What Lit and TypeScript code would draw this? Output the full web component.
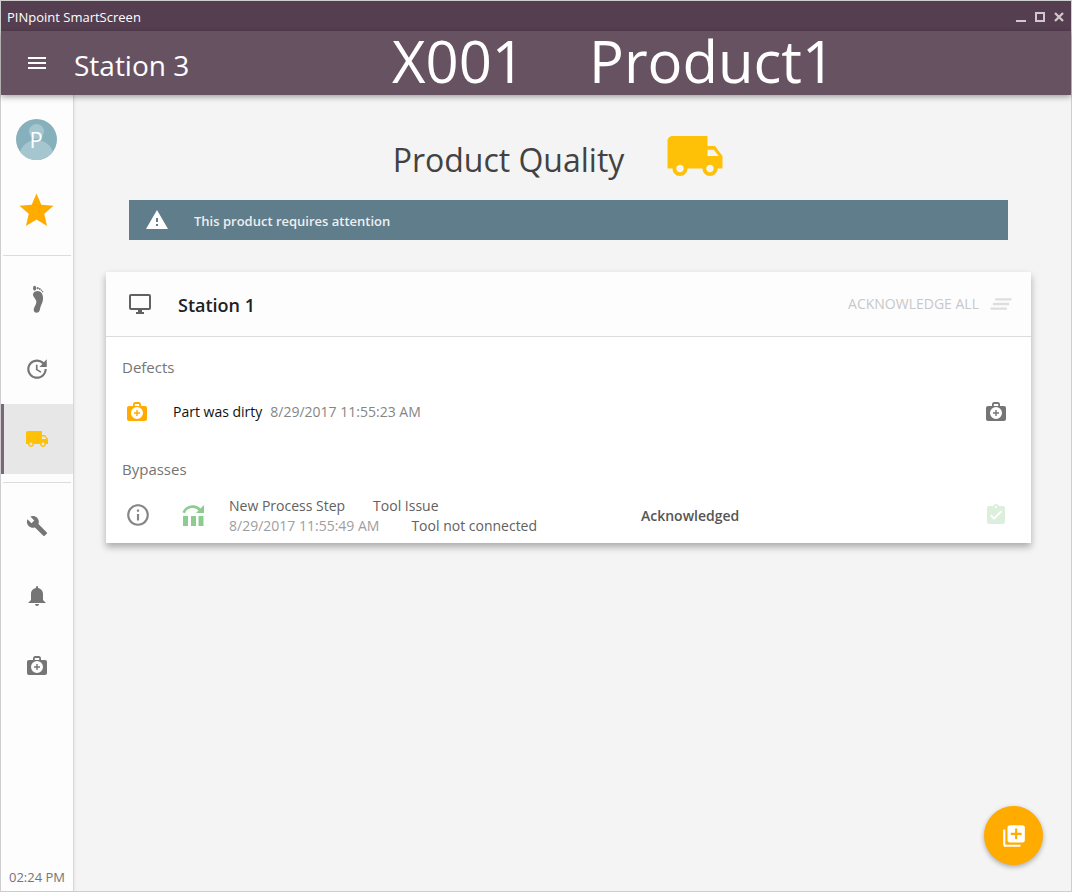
import { LitElement, html, css, svg } from "lit";
import { customElement, property } from "lit/decorators.js";

const icons: Record<string, unknown> = {
  menu: svg`<path d="M3 18h18v-2H3v2zm0-5h18v-2H3v2zm0-7v2h18V6H3z"/>`,
  minimize: svg`<path d="M2 18h20v4H2z"/>`,
  maximize: svg`<path fill-rule="evenodd" d="M2 2h20v20H2zM6 6v12h12V6z"/>`,
  close: svg`<path d="M4 4l16 16M20 4L4 20" fill="none" stroke="currentColor" stroke-width="4.600"/>`,
  star: svg`<path d="M12 17.270L18.180 21l-1.640-7.030L22 9.240l-7.190-.61L12 2 9.190 8.630 2 9.240l5.460 4.730L5.820 21z"/>`,
  foot: svg`<path d="M8.600 6.600C9.600 5 12.200 4.400 14 5.400c1.900 1.100 2.700 3.400 2.600 6-.1 2.700-1.300 4.400-2 6.400-.5 1.500-.5 3-1.300 4.200-.8 1.200-2.900 1.300-3.800.300-1-1.100-.7-2.600 0-4 .9-1.700 1.700-3.100 1.500-4.800C10.700 11 7.200 9.400 8.600 6.600z"/><ellipse cx="9.600" cy="2.700" rx="1.300" ry="2"/><circle cx="12.200" cy="2.600" r=".85"/><circle cx="13.900" cy="3.300" r=".75"/><circle cx="15.300" cy="4.300" r=".65"/><circle cx="16.300" cy="5.600" r=".55"/>`,
  update: svg`<path d="M21 10.120h-6.780l2.740-2.820c-2.730-2.700-7.150-2.800-9.880-.1-2.730 2.710-2.730 7.080 0 9.790 2.730 2.710 7.150 2.710 9.880 0C18.320 15.650 19 14.080 19 12.100h2c0 1.980-.88 4.550-2.640 6.290-3.510 3.480-9.210 3.480-12.720 0-3.500-3.470-3.530-9.110-.02-12.580 3.510-3.470 9.140-3.470 12.650 0L21 3v7.120zM12.500 8v4.250l3.500 2.080-.72 1.210L11 13V8h1.500z"/>`,
  truck: svg`<path d="M20 8h-3V4H3c-1.100 0-2 .9-2 2v11h2c0 1.660 1.340 3 3 3s3-1.340 3-3h6c0 1.660 1.340 3 3 3s3-1.340 3-3h2v-5l-3-4zM6 18.500c-.83 0-1.500-.67-1.500-1.500s.67-1.500 1.500-1.500 1.500.67 1.500 1.500-.67 1.500-1.500 1.500zm13.500-9l1.960 2.500H17V9.500h2.500zm-1.500 9c-.83 0-1.500-.67-1.500-1.500s.67-1.500 1.500-1.500 1.500.67 1.500 1.500-.67 1.500-1.500 1.500z"/>`,
  wrench: svg`<path d="M22.700 19l-9.100-9.100c.9-2.300.4-5-1.500-6.900-2-2-5-2.400-7.400-1.300L9 6 6 9 1.600 4.700C.4 7.100.9 10.100 2.900 12.100c1.900 1.900 4.600 2.400 6.900 1.500l9.100 9.100c.4.4 1 .4 1.400 0l2.300-2.300c.5-.4.5-1.100.1-1.400z"/>`,
  bell: svg`<path d="M14 20a2 2 0 0 1-2 2 2 2 0 0 1-2-2h4zM12 2a1 1 0 0 1 1 1v1.080c2.840.48 5 2.940 5 5.920v6l3 3H3l3-3v-6c0-2.980 2.160-5.440 5-5.920V3a1 1 0 0 1 1-1z"/>`,
  medkit: svg`<path fill-rule="evenodd" d="M8 6V4.500C8 3.100 8.900 2 10.200 2h3.600C15.100 2 16 3.100 16 4.500V6h4c1.200 0 2 .9 2 2v11c0 1.200-.9 2-2 2H4c-1.200 0-2-.9-2-2V8c0-1.200.9-2 2-2zm1.800 0h4.400V4H9.800zM12 7a6 6 0 1 0 0 12 6 6 0 0 0 0-12z"/><path d="M11.300 10h1.400v2.300H15v1.400h-2.300V16h-1.400v-2.300H9v-1.400h2.300z"/>`,
  warning: svg`<path d="M1 21h22L12 2 1 21zm12-3h-2v-2h2v2zm0-4h-2v-4h2v4z"/>`,
  monitor: svg`<path d="M21 16H3V4h18m0-2H3c-1.110 0-2 .89-2 2v12a2 2 0 0 0 2 2h7v2H8v2h8v-2h-2v-2h7a2 2 0 0 0 2-2V4a2 2 0 0 0-2-2z"/>`,
  clearAll: svg`<path d="M5 13h14v-2H5v2zm-2 4h14v-2H3v2zM7 7v2h14V7H7z"/>`,
  info: svg`<path d="M11 17h2v-6h-2v6zm1-15C6.480 2 2 6.480 2 12s4.480 10 10 10 10-4.480 10-10S17.520 2 12 2zm0 18c-4.410 0-8-3.590-8-8s3.590-8 8-8 8 3.590 8 8-3.590 8-8 8zM11 9h2V7h-2v2z"/>`,
  stepOver: svg`<path d="M2 13h5v10H2zM10 13h5v10h-5zM17.500 13h5v10h-5z"/><path d="M2.600 9.800C5.500 2.600 14.500 1.800 19.200 7.200" fill="none" stroke="currentColor" stroke-width="2.600"/><path d="M23 2v8h-8z"/>`,
  check: svg`<path d="M19 3h-4.180C14.400 1.840 13.300 1 12 1c-1.300 0-2.400.84-2.820 2H5c-1.100 0-2 .9-2 2v14c0 1.100.9 2 2 2h14c1.100 0 2-.9 2-2V5c0-1.100-.9-2-2-2zm-7 0c.55 0 1 .45 1 1s-.45 1-1 1-1-.45-1-1 .45-1 1-1zm-2 14l-4-4 1.410-1.410L10 14.170l6.590-6.590L18 9l-8 8z"/>`,
  libraryAdd: svg`<path d="M4 6H2v14c0 1.100.9 2 2 2h14v-2H4V6zm16-4H8c-1.100 0-2 .9-2 2v12c0 1.100.9 2 2 2h12c1.100 0 2-.9 2-2V4c0-1.100-.9-2-2-2zm-1 9h-4v4h-2v-4H9V9h4V5h2v4h4v2z"/>`,
};

@customElement("ui-icon")
export class UiIcon extends LitElement {
  @property() name = "";

  static styles = css`
    :host { display: block; flex: none; width: 24px; height: 24px; }
    svg { display: block; width: 100%; height: 100%; fill: currentColor; }
  `;

  render() {
    return html`<svg viewBox="0 0 24 24" aria-hidden="true">${icons[this.name]}</svg>`;
  }
}

@customElement("side-nav")
export class SideNav extends LitElement {
  static styles = css`
    :host {
      display: flex;
      flex-direction: column;
      flex: none;
      width: 72px;
      background: #fdfdfd;
      border-right: 1px solid #d8d8d8;
      box-shadow: 1px 0 2px rgba(0, 0, 0, 0.06);
      color: #757575;
    }
    button {
      display: flex;
      align-items: center;
      justify-content: center;
      width: 100%;
      height: 70px;
      padding: 0;
      border: 0;
      background: none;
      color: inherit;
      font: inherit;
      cursor: pointer;
    }
    .profile { display: grid; gap: 1px; padding: 9px 2px 2px 0; }
    .avatar {
      display: grid;
      width: 41px;
      height: 41px;
      border-radius: 50%;
      overflow: hidden;
      background: #86b1bc;
    }
    .avatar > * { grid-area: 1 / 1; }
    .avatar svg { display: block; width: 41px; height: 41px; }
    .initial { place-self: center; color: #fff; font-size: 22px; line-height: 41px; }
    .star { width: 41px; height: 41px; color: #ffab00; }
    hr { width: calc(100% - 4px); height: 1px; margin: 8px 2px; border: 0; background: #dcdcdc; }
    nav { display: flex; flex-direction: column; }
    .foot { width: 29px; height: 29px; }
    .update { width: 26px; height: 26px; }
    .wrench { width: 22px; height: 22px; }
    .active {
      background: #e7e7e7;
      border-left: 3px solid #7a6878;
      padding-right: 3px;
      color: #ffc107;
    }
    time { margin-top: auto; padding-bottom: 4px; text-align: center; font-size: 13px; line-height: 20px; }
  `;

  render() {
    return html`
      <div class="profile">
        <button aria-label="Profile">
          <span class="avatar">
            <svg viewBox="0 0 41 41" fill="#a5c6cf">
              <circle cx="20.500" cy="12.500" r="7.500" />
              <ellipse cx="20.500" cy="37" rx="17" ry="16" />
            </svg>
            <span class="initial">P</span>
          </span>
        </button>
        <button aria-label="Favorites"><ui-icon class="star" name="star"></ui-icon></button>
      </div>
      <hr />
      <nav aria-label="Station">
        <button aria-label="Steps"><ui-icon class="foot" name="foot"></ui-icon></button>
        <button aria-label="History"><ui-icon class="update" name="update"></ui-icon></button>
        <button class="active" aria-label="Product quality" aria-current="page"><ui-icon name="truck"></ui-icon></button>
      </nav>
      <hr />
      <nav aria-label="Tools">
        <button aria-label="Maintenance"><ui-icon class="wrench" name="wrench"></ui-icon></button>
        <button aria-label="Alerts"><ui-icon name="bell"></ui-icon></button>
        <button aria-label="Repairs"><ui-icon name="medkit"></ui-icon></button>
      </nav>
      <time>02:24 PM</time>
    `;
  }
}

@customElement("station-card")
export class StationCard extends LitElement {
  static styles = css`
    :host {
      display: block;
      background: #fff;
      box-shadow: 0 4px 7px rgba(0, 0, 0, 0.3);
      font-size: 14px;
      line-height: 20px;
      color: #616161;
    }
    button { display: flex; align-items: center; padding: 0; border: 0; background: none; font: inherit; color: inherit; cursor: pointer; }
    header {
      display: flex;
      align-items: center;
      height: 64px;
      padding: 0 16px 0 22px;
      background: #fdfdfd;
      border-bottom: 1px solid #dcdcdc;
    }
    h2 { flex: 1; margin: 0 0 0 26px; padding-top: 2px; font-size: 18px; font-weight: 600; line-height: 28px; color: #212121; }
    .ack { gap: 8px; color: #c8c8c8; }
    .ack ui-icon { width: 28px; height: 28px; color: #dedede; }
    .body { display: grid; gap: 12px; padding: 6px 23px 6px 16px; }
    h3 { margin: 0; font-size: 15px; font-weight: 400; line-height: 48px; color: #757575; }
    .row { display: flex; align-items: center; height: 42px; }
    .defect > ui-icon { margin: 0 24px 0 3px; color: #ffab00; }
    .defect strong { margin-right: 8px; font-weight: 400; color: #111; }
    .defect .kit { margin-left: auto; color: #757575; }
    .bypass {
      display: grid;
      grid-template-columns: 56px 51px minmax(0, 412fr) minmax(0, 343fr) 24px;
      height: 44px;
    }
    .info { margin-left: 3px; width: 26px; height: 26px; color: #858585; }
    .over { margin-left: 3px; color: #8ccd8f; }
    .text { padding-top: 2px; }
    .line { display: flex; gap: 28px; white-space: nowrap; }
    .line.detail { gap: 32px; }
    .muted { color: #858585; }
    .light { color: #9e9e9e; }
    .state { padding-top: 2px; font-weight: 600; color: #555; }
    .done { color: #dcefdc; }
  `;

  render() {
    return html`
      <header>
        <ui-icon name="monitor"></ui-icon>
        <h2>Station 1</h2>
        <button class="ack">ACKNOWLEDGE ALL <ui-icon name="clearAll"></ui-icon></button>
      </header>
      <div class="body">
        <section>
          <h3>Defects</h3>
          <div class="row defect">
            <ui-icon name="medkit"></ui-icon>
            <strong>Part was dirty</strong>
            <span class="muted">8/29/2017 11:55:23 AM</span>
            <button class="kit" aria-label="Repair"><ui-icon name="medkit"></ui-icon></button>
          </div>
        </section>
        <section>
          <h3>Bypasses</h3>
          <div class="row bypass">
            <ui-icon class="info" name="info"></ui-icon>
            <ui-icon class="over" name="stepOver"></ui-icon>
            <div class="text">
              <div class="line"><span>New Process Step</span><span>Tool Issue</span></div>
              <div class="line detail"><span class="light">8/29/2017 11:55:49 AM</span><span>Tool not connected</span></div>
            </div>
            <span class="state">Acknowledged</span>
            <button class="done" aria-label="Acknowledge"><ui-icon name="check"></ui-icon></button>
          </div>
        </section>
      </div>
    `;
  }
}

@customElement("app-root")
export class AppRoot extends LitElement {
  static styles = css`
    :host {
      display: flex;
      flex-direction: column;
      position: relative;
      box-sizing: border-box;
      min-height: 100vh;
      border: 1px solid #cfcfcf;
      background: #f4f4f4;
      font-family: "Open Sans", "Noto Sans", sans-serif;
      color: #424242;
    }
    button { display: flex; align-items: center; justify-content: center; padding: 0; border: 0; background: none; color: inherit; cursor: pointer; }
    .titlebar {
      display: flex;
      align-items: center;
      justify-content: space-between;
      height: 30px;
      padding: 0 6px;
      background: #553e50;
      color: #fff;
      font-size: 13px;
      line-height: 20px;
    }
    .titlebar > span { padding-top: 1px; }
    .controls { display: flex; gap: 7px; padding-top: 1px; color: #d0c8ce; }
    .controls ui-icon { width: 12px; height: 12px; }
    .appbar {
      display: grid;
      grid-template-columns: 72px minmax(0, 319px) 1fr;
      align-items: center;
      height: 64px;
      background: #675262;
      box-shadow: 0 2px 6px rgba(0, 0, 0, 0.35);
      z-index: 1;
      color: #fff;
    }
    .station { padding: 4px 0 0 1px; font-size: 28px; line-height: 40px; }
    .product { display: flex; gap: 64px; padding-bottom: 5px; font-size: 58px; line-height: 59px; white-space: nowrap; }
    .layout { display: flex; flex: 1; }
    main { flex: 1; min-width: 0; padding: 31px 40px 32px 32px; }
    .heading { display: flex; align-items: center; justify-content: center; gap: 41px; padding-right: 19px; height: 60px; }
    h1 { margin: 0; padding-top: 8px; font-size: 32px; font-weight: 400; line-height: 44px; }
    .heading ui-icon { width: 60px; height: 60px; color: #ffc107; }
    .alert {
      display: flex;
      align-items: center;
      gap: 25px;
      height: 40px;
      margin: 14px 23px 32px;
      padding: 0 16px;
      background: #607d8b;
      color: #eceff1;
      font-size: 13px;
      font-weight: 600;
      line-height: 20px;
    }
    .alert ui-icon { color: #fff; }
    .alert span { padding-top: 2px; }
    .fab {
      position: absolute;
      right: 28px;
      bottom: 26px;
      width: 59px;
      height: 59px;
      border-radius: 50%;
      background: #ffab00;
      color: #fff;
      box-shadow: 0 2px 5px rgba(0, 0, 0, 0.3);
    }
    .fab ui-icon { width: 26px; height: 26px; }
  `;

  render() {
    return html`
      <div class="titlebar">
        <span>PINpoint SmartScreen</span>
        <div class="controls">
          <button aria-label="Minimize"><ui-icon name="minimize"></ui-icon></button>
          <button aria-label="Maximize"><ui-icon name="maximize"></ui-icon></button>
          <button aria-label="Close"><ui-icon name="close"></ui-icon></button>
        </div>
      </div>
      <div class="appbar">
        <button aria-label="Menu"><ui-icon name="menu"></ui-icon></button>
        <span class="station">Station 3</span>
        <div class="product"><span>X001</span><span>Product1</span></div>
      </div>
      <div class="layout">
        <side-nav></side-nav>
        <main>
          <div class="heading">
            <h1>Product Quality</h1>
            <ui-icon name="truck"></ui-icon>
          </div>
          <div class="alert" role="alert">
            <ui-icon name="warning"></ui-icon>
            <span>This product requires attention</span>
          </div>
          <station-card></station-card>
        </main>
      </div>
      <button class="fab" aria-label="Add"><ui-icon name="libraryAdd"></ui-icon></button>
    `;
  }
}
